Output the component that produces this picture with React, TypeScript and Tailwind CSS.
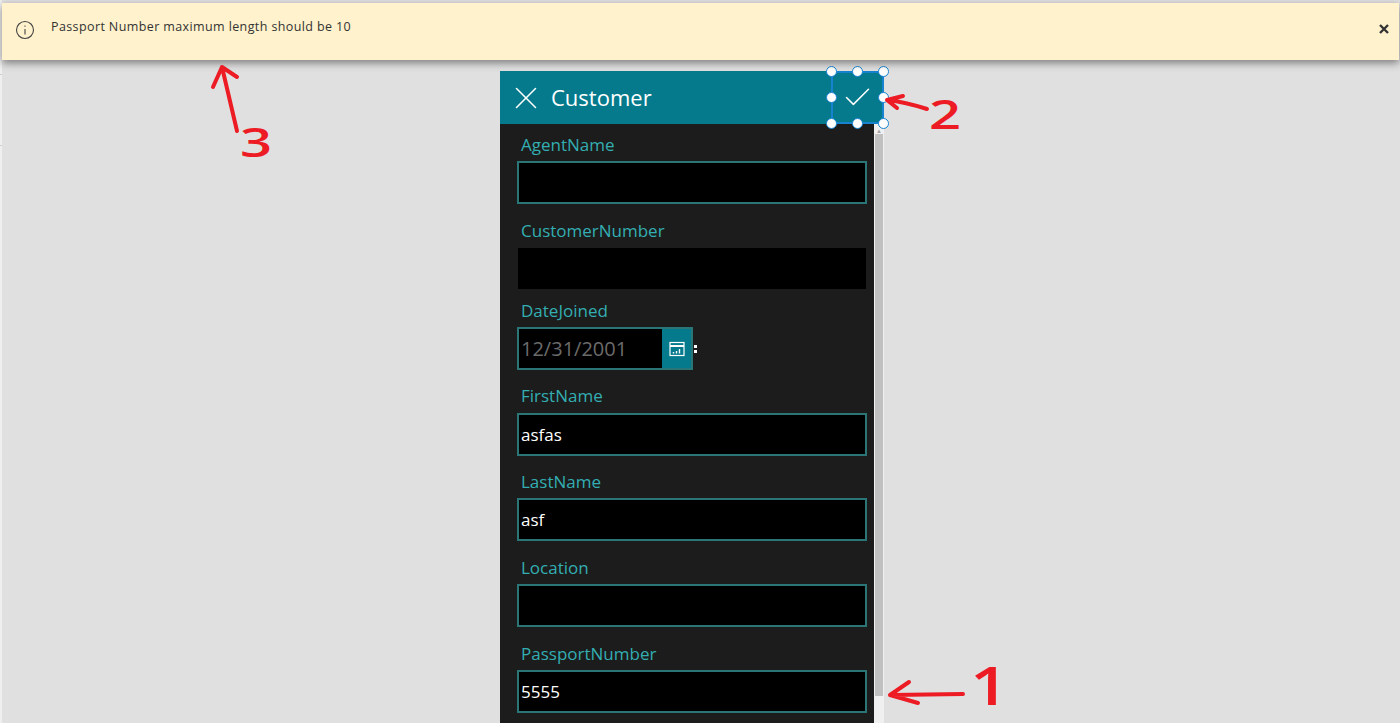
import { Check, X } from "lucide-react"

const fields = [
  { label: "AgentName", value: "", top: "h-[37px] pb-[5px]", border: "border-2 border-[#2a7676]" },
  { label: "CustomerNumber", value: "", top: "h-[43px] pb-[5px]", border: "border border-[#1c1c1c]" },
  { label: "DateJoined", date: true, top: "h-[37px] pb-[5px]", border: "border-2 border-[#2a7676]" },
  { label: "FirstName", value: "asfas", top: "h-[43px] pb-[6px]", border: "border-2 border-[#2a7676]" },
  { label: "LastName", value: "asf", top: "h-[42px] pb-[5px]", border: "border-2 border-[#2a7676]" },
  { label: "Location", value: "", top: "h-[43px] pb-[5px]", border: "border-2 border-[#2a7676]" },
  { label: "PassportNumber", value: "5555", top: "h-[43px] pb-[5px]", border: "border-2 border-[#2a7676]" },
]

const handleSpots = [
  "-left-[7px] -top-[7px]",
  "left-[19px] -top-[7px]",
  "-right-[7px] -top-[7px]",
  "-left-[7px] top-[19px]",
  "-right-[7px] top-[19px]",
  "-left-[7px] -bottom-[7px]",
  "left-[19px] -bottom-[7px]",
  "-right-[7px] -bottom-[7px]",
]

function CalendarIcon() {
  return (
    <svg width="16" height="16" viewBox="0 0 16 16" fill="none" stroke="white" strokeWidth="1.2">
      <rect x="1" y="1.5" width="14" height="13" />
      <path d="M1 5h14" strokeWidth="2" />
      <path d="M4.5 11v1.5M7.5 10v2.5M10.5 8v4.5" strokeWidth="1.4" />
    </svg>
  )
}

function Field({ field }: { field: (typeof fields)[number] }) {
  return (
    <div>
      <div className={`${field.top} flex items-end pl-[21px]`}>
        <span className="text-[17px] leading-[22px] text-[#33aeb2]">{field.label}</span>
      </div>
      {field.date ? (
        <div className="ml-[17px] flex items-center">
          <div className="flex h-[43px] w-[176px] border-2 border-[#2a7676] bg-black">
            <div className="flex-1 pl-[2px] text-[20px] leading-[39px] text-[#6b6b6b]">12/31/2001</div>
            <div className="flex w-[29px] items-center justify-center bg-[#047a8c]">
              <CalendarIcon />
            </div>
          </div>
          <div className="ml-[1px] flex flex-col gap-[2px]">
            <span className="h-[3px] w-[3px] bg-white" />
            <span className="h-[3px] w-[3px] bg-white" />
          </div>
        </div>
      ) : (
        <div
          className={`ml-[17px] h-[43px] w-[350px] ${field.border} bg-black pl-[2px] text-[17px] leading-[40px] text-white`}
        >
          {field.value}
        </div>
      )}
    </div>
  )
}

export default function App() {
  return (
    <div className="relative flex h-[723px] w-[1400px] overflow-hidden bg-[#e0e0e0] font-['Open_Sans',sans-serif]">
      {/* left edge of the studio canvas */}
      <div className="flex w-[2px] flex-col bg-[#efefef] pt-[74px]">
        <div className="h-px bg-[#cfcfcf]" />
        <div className="mt-[70px] h-px bg-[#cfcfcf]" />
      </div>

      <div className="ml-[498px] mt-[71px] flex h-[652px] w-[384px] flex-col">
        <div className="flex h-[53px] items-center bg-[#047a8c] text-white">
          <X className="ml-[7px] h-[38px] w-[38px]" strokeWidth={1} />
          <span className="ml-[6px] pb-[2px] text-[22px] leading-none">Customer</span>
          <div className="relative ml-auto flex h-[53px] w-[53px] items-center justify-center border-2 border-[#1683d0]">
            <Check className="h-[33px] w-[33px]" strokeWidth={1.1} />
            {handleSpots.map((spot) => (
              <span
                key={spot}
                className={`absolute ${spot} h-[11px] w-[11px] rounded-full border border-[#1683d0] bg-white`}
              />
            ))}
          </div>
        </div>
        <div className="flex min-h-0 flex-1">
          <div className="w-[374px] overflow-hidden bg-[#1c1c1c]">
            {fields.map((f) => (
              <Field key={f.label} field={f} />
            ))}
          </div>
          <div className="flex w-[10px] flex-col bg-[#f0f0f0] px-[1px]">
            <div className="flex h-[10px] items-center justify-center pt-[3px] text-[6px] leading-none text-[#a0a0a0]">▲</div>
            <div className="h-[562px] bg-[#c0c0c0]" />
          </div>
        </div>
      </div>

      {/* message banner */}
      <div className="absolute left-[2px] right-[1px] top-[3px] flex h-[57px] bg-[#fff2cc] text-[#333333] shadow-[0_3px_8px_rgba(0,0,0,0.45)]">
        <svg className="ml-[13px] mt-[17px]" width="20" height="20" viewBox="0 0 20 20" fill="none" stroke="#444444">
          <circle cx="10" cy="10" r="8.5" strokeWidth="1.1" />
          <path d="M10 9v5.5M10 5.5v1.2" strokeWidth="1.1" />
        </svg>
        <span className="ml-[16px] mt-[14px] text-[12.5px] leading-[20px] tracking-[0.39px]">
          Passport Number maximum length should be 10
        </span>
        <svg className="ml-auto mr-[10px] mt-[21px]" width="10" height="10" viewBox="0 0 10 10" stroke="#333333" strokeWidth="2.4">
          <path d="M1 1l8 8M9 1l-8 8" />
        </svg>
      </div>

      {/* red marker annotations */}
      <svg className="pointer-events-none absolute left-0 top-0" width="1400" height="723" fill="none" stroke="#ed1c24" strokeWidth="4" strokeLinecap="round" strokeLinejoin="round">
        <path d="M237 131L222 67M213 87L222 67L237 77" />
        <path d="M927 109Q905 102 887 100M903 96L887 100L897 108" />
        <path d="M963 694L892 695M909 682L890 695L918 703" />
      </svg>
      <span className="absolute left-[240px] top-[115px] origin-left scale-x-[1.4] text-[40px] font-semibold leading-[54px] text-[#ed1c24]">3</span>
      <span className="absolute left-[929px] top-[87px] origin-left scale-x-[1.4] text-[40px] font-semibold leading-[54px] text-[#ed1c24]">2</span>
      <span className="absolute left-[970px] top-[650px] origin-left scale-x-[1.3] text-[52px] font-semibold leading-[70px] text-[#ed1c24]">1</span>
    </div>
  )
}
